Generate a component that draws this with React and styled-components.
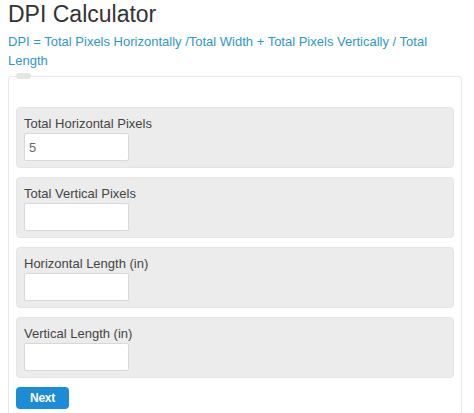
import React from "react";
import styled, { createGlobalStyle } from "styled-components";

const GlobalStyle = createGlobalStyle`
  body {
    margin: 0;
    background: #ffffff;
    font-family: "Liberation Sans", Arial, sans-serif;
  }
`;

const Page = styled.div`
  padding: 0 12px 0 8px;
`;

const Title = styled.h1`
  margin: 1px 0 0;
  font-size: 23px;
  line-height: 26px;
  font-weight: 400;
  color: #333333;
`;

const Formula = styled.p`
  margin: 5px 0 0;
  font-size: 13px;
  line-height: 19px;
  color: #2e98c8;
`;

const Card = styled.div`
  position: relative;
  margin-top: 6px;
  border: 1px solid #e8e8e8;
  border-bottom: none;
  border-radius: 4px 4px 0 0;
  padding: 30px 7px 6px;
  display: flex;
  flex-direction: column;
  gap: 9px;
`;

const Tab = styled.span`
  position: absolute;
  left: 7px;
  top: -4px;
  width: 15px;
  height: 6px;
  border-radius: 3px;
  background: #e4e4e4;
`;

const Well = styled.div`
  box-sizing: border-box;
  height: 61px;
  padding: 7px 7px 6px;
  border: 1px solid #e5e5e5;
  border-radius: 4px;
  background: #ececec;
`;

const Label = styled.label`
  display: block;
  font-size: 13px;
  line-height: 18px;
  color: #444444;
`;

const Field = styled.input`
  display: block;
  box-sizing: border-box;
  width: 105px;
  height: 28px;
  margin: 0;
  padding: 0 4px;
  border: 1px solid #d8d8d8;
  border-radius: 2px;
  background: #ffffff;
  font-family: "Liberation Sans", Arial, sans-serif;
  font-size: 13px;
  color: #666666;
  outline: none;
`;

const NextButton = styled.button`
  align-self: flex-start;
  width: 53px;
  height: 22px;
  padding: 0;
  border: none;
  border-radius: 4px;
  background: #1b8dd6;
  color: #ffffff;
  font-family: "Liberation Sans", Arial, sans-serif;
  font-size: 12px;
  font-weight: 700;
  letter-spacing: -0.3px;
`;

const fields = [
  { label: "Total Horizontal Pixels", value: "5" },
  { label: "Total Vertical Pixels", value: "" },
  { label: "Horizontal Length (in)", value: "" },
  { label: "Vertical Length (in)", value: "" },
];

export default function App() {
  return (
    <>
      <GlobalStyle />
      <Page>
        <Title>DPI Calculator</Title>
        <Formula>
          DPI = Total Pixels Horizontally /Total Width + Total Pixels Vertically / Total Length
        </Formula>
        <Card>
          <Tab />
          {fields.map((f) => (
            <Well key={f.label}>
              <Label>{f.label}</Label>
              <Field defaultValue={f.value} />
            </Well>
          ))}
          <NextButton>Next</NextButton>
        </Card>
      </Page>
    </>
  );
}
